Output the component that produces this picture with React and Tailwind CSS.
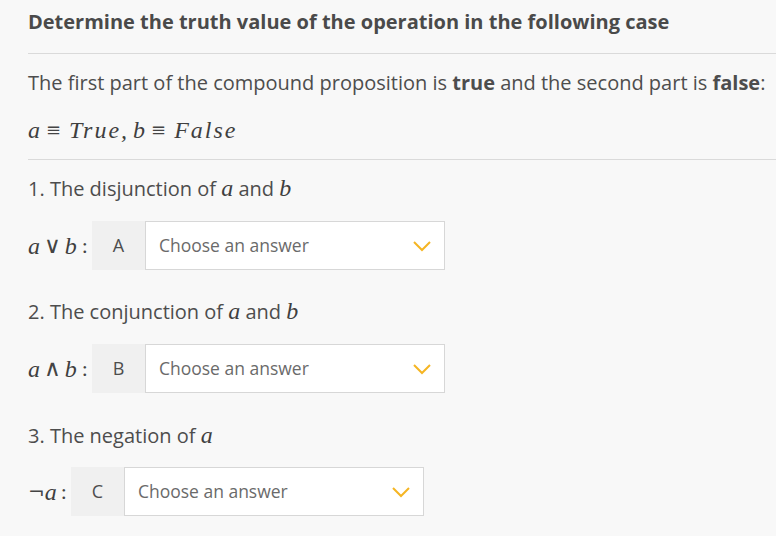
import React from 'react';

const M = ({ children, className = '' }) => (
  <span className={`font-['Liberation_Serif',serif] italic text-[24px] leading-none text-[#3f3f3f] ${className}`}>{children}</span>
);

const Op = ({ children, className = '' }) => (
  <span className={`not-italic leading-none text-[#444] ${className}`}>{children}</span>
);

function Chevron() {
  return (
    <svg width="20" height="12" viewBox="0 0 20 12" className="shrink-0">
      <polyline points="2,2 10,10 18,2" fill="none" stroke="#f5b523" strokeWidth="2" />
    </svg>
  );
}

function AnswerRow({ label, letter }) {
  return (
    <div className="flex h-[49px] items-stretch">
      <div className="flex items-center pr-[4px]">{label}</div>
      <div className="flex w-[53px] items-center justify-center bg-[#f0f0f0] text-[18px] text-[#4d4d4d]">{letter}</div>
      <div className="flex w-[300px] items-center justify-between border border-[#d7d7d7] bg-white pl-[13px] pr-[12px]">
        <span className="text-[17.5px] text-[#6a6a6a]">Choose an answer</span>
        <Chevron />
      </div>
    </div>
  );
}

const Colon = ({ className = '' }) => (
  <span className={`text-[22px] leading-none text-[#444] font-['Liberation_Serif',serif] ${className}`}>:</span>
);

export default function App() {
  return (
    <div className="min-h-screen bg-[#f8f8f8] pl-[28px] font-['Open_Sans',sans-serif] text-[#4d4d4d]">
      <h2 className="pt-[8px] pb-[17px] text-[20px] font-bold leading-[28px] text-[#4a4a4a]">
        Determine the truth value of the operation in the following case
      </h2>
      <div className="border-t border-[#dadada]" />

      <p className="mt-[15px] text-[20px] leading-[28px]">
        The first part of the compound proposition is <b>true</b> and the second part is <b>false</b>:
      </p>
      <div className="mt-[19px] mb-[15px] flex h-[28px] items-center">
        <M>a</M>
        <Op className="font-['DejaVu_Serif',serif] text-[18px] ml-[6px] mr-[8px]">≡</Op>
        <M className="tracking-[2px]">True,</M>
        <M className="ml-[4px]">b</M>
        <Op className="font-['DejaVu_Serif',serif] text-[18px] ml-[6px] mr-[8px]">≡</Op>
        <M className="tracking-[2px]">False</M>
      </div>
      <div className="border-t border-[#dadada]" />

      <p className="mt-[15px] mb-[18px] text-[20px] leading-[28px]">
        1. The disjunction of <M>a</M> and <M>b</M>
      </p>
      <AnswerRow
        letter="A"
        label={<span className="flex items-center"><M>a</M><Op className="font-['DejaVu_Sans',sans-serif] text-[23px] mx-[4px]">∨</Op><M>b</M><Colon className="ml-[5px]" /></span>}
      />

      <p className="mt-[28px] mb-[18px] text-[20px] leading-[28px]">
        2. The conjunction of <M>a</M> and <M>b</M>
      </p>
      <AnswerRow
        letter="B"
        label={<span className="flex items-center"><M>a</M><Op className="font-['DejaVu_Sans',sans-serif] text-[23px] mx-[4px]">∧</Op><M>b</M><Colon className="ml-[5px]" /></span>}
      />

      <p className="mt-[29px] mb-[17px] text-[20px] leading-[28px]">
        3. The negation of <M>a</M>
      </p>
      <AnswerRow
        letter="C"
        label={<span className="flex items-center"><Op className="font-['DejaVu_Serif',serif] text-[20px]">¬</Op><M>a</M><Colon className="ml-[4px]" /></span>}
      />
    </div>
  );
}
